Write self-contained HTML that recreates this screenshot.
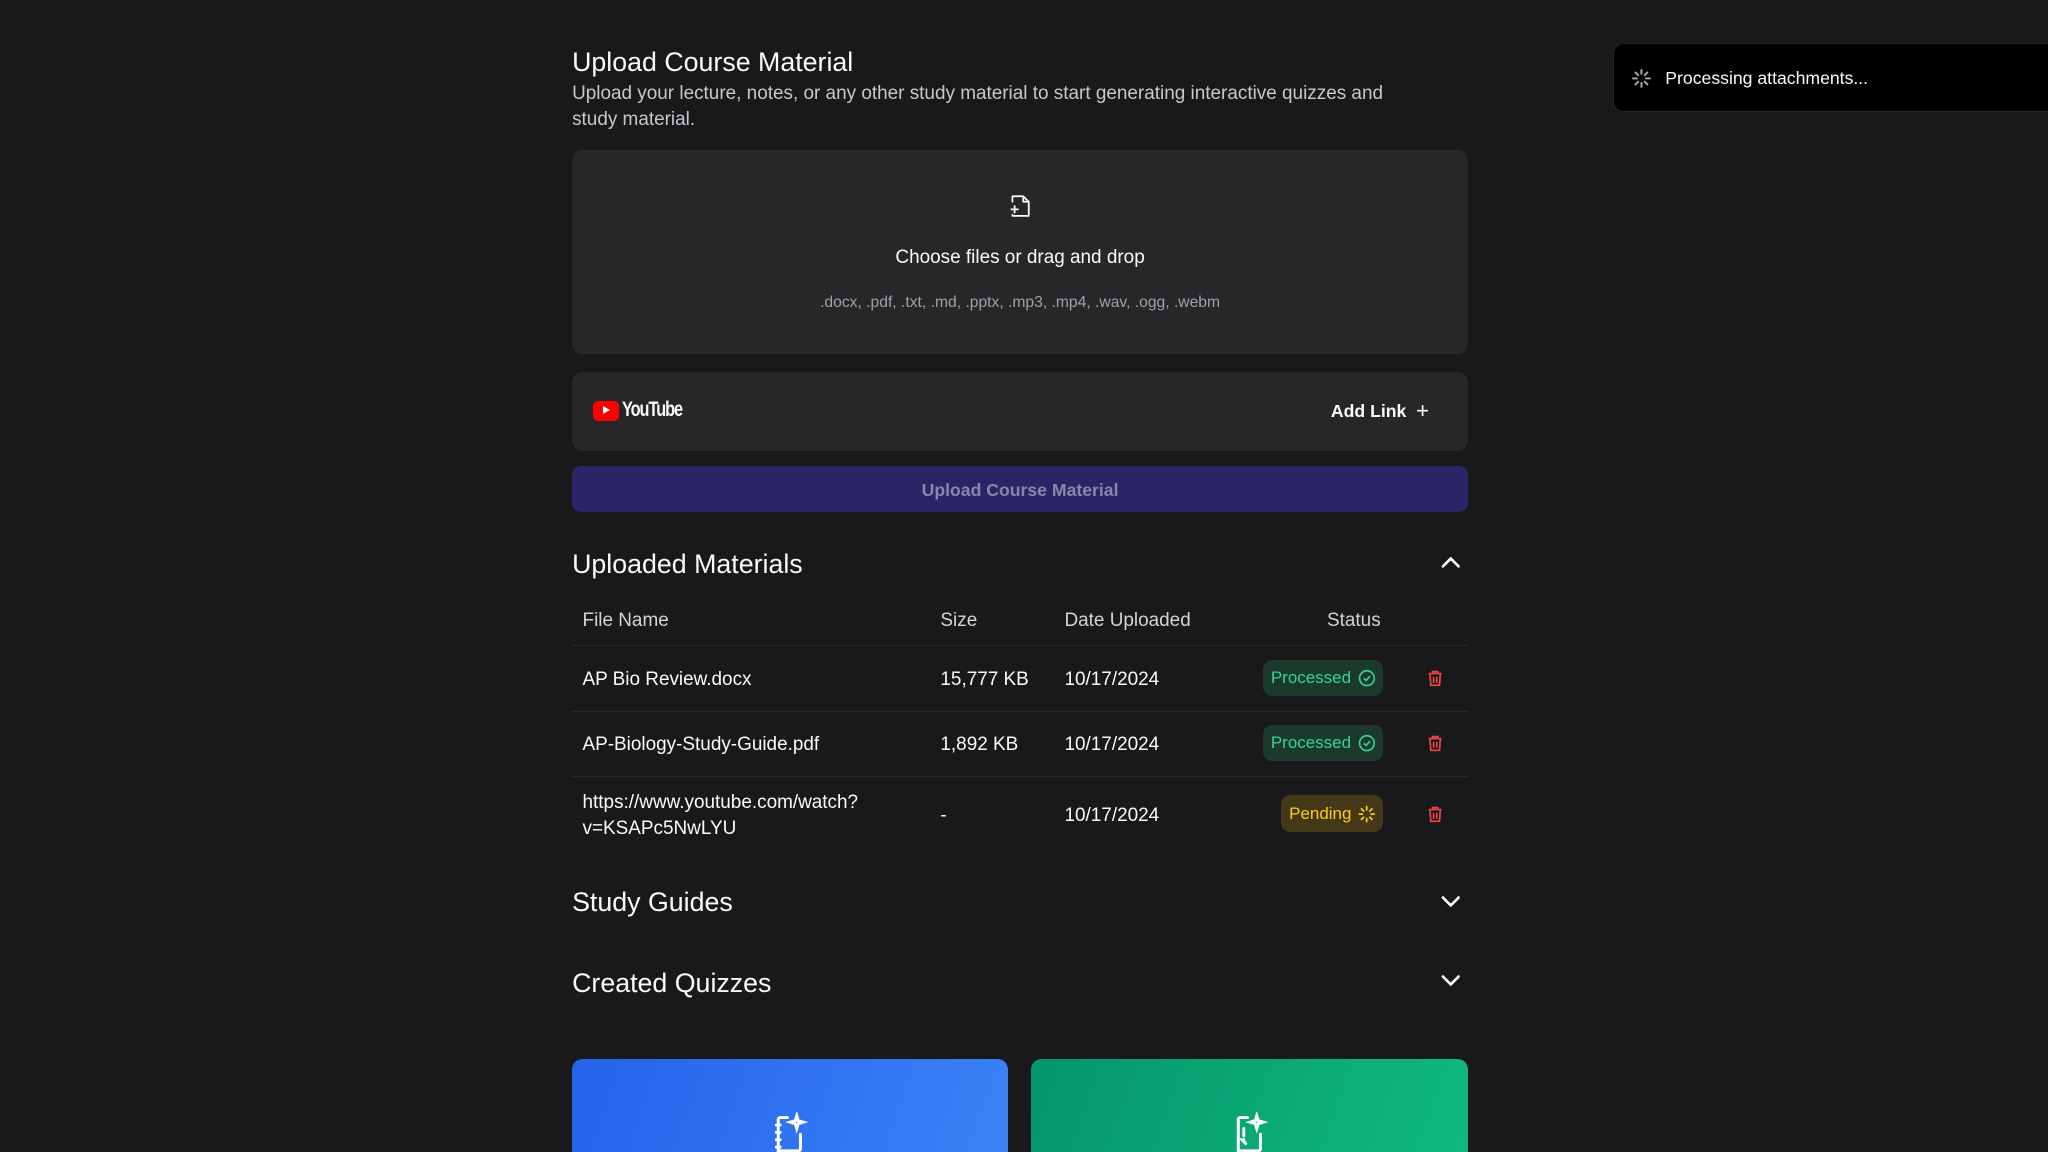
<!DOCTYPE html>
<html><head><meta charset="utf-8"><style>
html,body{margin:0;padding:0;background:#19191b;overflow:hidden}
#w{zoom:1.30612;width:1568px;height:882px;position:relative;font-family:"Liberation Sans",sans-serif;color:#fafafa}
.a{position:absolute}
.t{font-size:14.5px}
.row{position:absolute;left:438px;width:686px;border-bottom:1px solid #2a2a2e}
.badge{position:absolute;height:28px;border-radius:7px;font-size:13px;display:flex;align-items:center;gap:5px;padding:0 6px;box-sizing:border-box}
.ok{background:#1c3a2c;color:#34d399}
.pe{background:#453819;color:#facc15}
</style></head><body><div id="w">
<div class="a" style="left:438px;top:36px;font-size:20.5px">Upload Course Material</div>
<div class="a t" style="left:438px;top:62px;width:650px;line-height:20px;color:#c8c8cc">Upload your lecture, notes, or any other study material to start generating interactive quizzes and study material.</div>
<div class="a" style="left:438px;top:115px;width:686px;height:156px;background:#27272a;border-radius:8px"></div>
<svg class="a" style="left:771px;top:148px" width="20" height="20" viewBox="0 0 24 24" fill="none" stroke="#fff" stroke-width="1.6" stroke-linecap="round" stroke-linejoin="round"><path d="M5 8V3h10l5 5v13H5v-1"/><path d="M15 3v5h5"/><path d="M4 15h6M7 12v6"/></svg>
<div class="a t" style="left:438px;width:686px;top:189px;text-align:center">Choose files or drag and drop</div>
<div class="a" style="left:438px;width:686px;top:225px;text-align:center;font-size:12px;color:#a0a0a6">.docx, .pdf, .txt, .md, .pptx, .mp3, .mp4, .wav, .ogg, .webm</div>
<div class="a" style="left:438px;top:285px;width:686px;height:60px;background:#27272a;border-radius:8px"></div>
<div class="a" style="left:454px;top:307px;width:20px;height:15px;background:#ff0000;border-radius:4px"></div>
<div class="a" style="left:462px;top:311px;width:0;height:0;border-left:6px solid #fff;border-top:3.5px solid transparent;border-bottom:3.5px solid transparent"></div>
<div class="a" style="left:476px;top:305px;font-size:16px;font-weight:bold;letter-spacing:-1px;transform:scaleX(.78);transform-origin:left">YouTube</div>
<div class="a" style="left:1019px;top:304px;font-size:13.5px;font-weight:bold">Add Link &nbsp;<span style="font-weight:normal;font-size:17px;position:relative;top:1px">+</span></div>
<div class="a" style="left:438px;top:357px;width:686px;height:35px;background:#2a2566;border-radius:7px;text-align:center;line-height:37px;font-size:13.5px;color:#8a87a8;font-weight:bold">Upload Course Material</div>
<div class="a" style="left:438px;top:420px;font-size:20.5px">Uploaded Materials</div>
<svg class="a" style="left:1102px;top:423px" width="18" height="16" viewBox="0 0 18 16" fill="none" stroke="#fff" stroke-width="2" stroke-linecap="round"><path d="M3 11l6-6 6 6"/></svg>
<div class="row" style="top:455px;height:39px"></div>
<div class="a t" style="left:446px;top:467px;color:#d4d4d8">File Name</div>
<div class="a t" style="left:720px;top:467px;color:#d4d4d8">Size</div>
<div class="a t" style="left:815px;top:467px;color:#d4d4d8">Date Uploaded</div>
<div class="a t" style="left:1016px;top:467px;color:#d4d4d8">Status</div>
<div class="row" style="top:495px;height:49px"></div>
<div class="row" style="top:545px;height:49px"></div>
<div class="a t" style="left:446px;top:512px">AP Bio Review.docx</div>
<div class="a t" style="left:720px;top:512px">15,777 KB</div>
<div class="a t" style="left:815px;top:512px">10/17/2024</div>
<div class="a t" style="left:446px;top:562px">AP-Biology-Study-Guide.pdf</div>
<div class="a t" style="left:720px;top:562px">1,892 KB</div>
<div class="a t" style="left:815px;top:562px">10/17/2024</div>
<div class="a t" style="left:446px;top:605px;line-height:20px">https://www.youtube.com/watch?<br>v=KSAPc5NwLYU</div>
<div class="a t" style="left:720px;top:616px">-</div>
<div class="a t" style="left:815px;top:616px">10/17/2024</div>
<div class="badge ok" style="left:967px;top:505px;width:92px">Processed<svg width="14" height="14" viewBox="0 0 14 14" fill="none" stroke="#34d399" stroke-width="1.3"><circle cx="7" cy="7" r="5.8"/><path d="M4.6 7.2l1.7 1.6 3.2-3.3"/></svg></div>
<div class="badge ok" style="left:967px;top:555px;width:92px">Processed<svg width="14" height="14" viewBox="0 0 14 14" fill="none" stroke="#34d399" stroke-width="1.3"><circle cx="7" cy="7" r="5.8"/><path d="M4.6 7.2l1.7 1.6 3.2-3.3"/></svg></div>
<div class="badge pe" style="left:981px;top:609px;width:78px">Pending<svg width="14" height="14" viewBox="0 0 14 14" fill="none" stroke="#facc15" stroke-width="1.4" stroke-linecap="round"><path d="M7 1v2.5M7 10.5V13M1 7h2.5M10.5 7H13M2.8 2.8l1.7 1.7M9.5 9.5l1.7 1.7M2.8 11.2l1.7-1.7M9.5 4.5l1.7-1.7"/></svg></div>
<svg class="a" style="left:1092px;top:512px" width="14" height="14" viewBox="0 0 14 14" fill="none" stroke="#ef4444" stroke-width="1.3"><path d="M2 3.5h10M5 3.5V2h4v1.5M3 3.5l.7 9h6.6l.7-9M5.8 6v4.5M8.2 6v4.5"/></svg>
<svg class="a" style="left:1092px;top:562px" width="14" height="14" viewBox="0 0 14 14" fill="none" stroke="#ef4444" stroke-width="1.3"><path d="M2 3.5h10M5 3.5V2h4v1.5M3 3.5l.7 9h6.6l.7-9M5.8 6v4.5M8.2 6v4.5"/></svg>
<svg class="a" style="left:1092px;top:616px" width="14" height="14" viewBox="0 0 14 14" fill="none" stroke="#ef4444" stroke-width="1.3"><path d="M2 3.5h10M5 3.5V2h4v1.5M3 3.5l.7 9h6.6l.7-9M5.8 6v4.5M8.2 6v4.5"/></svg>
<div class="a" style="left:438px;top:679px;font-size:20.5px">Study Guides</div>
<svg class="a" style="left:1102px;top:682px" width="18" height="16" viewBox="0 0 18 16" fill="none" stroke="#fff" stroke-width="2" stroke-linecap="round"><path d="M3 5l6 6 6-6"/></svg>
<div class="a" style="left:438px;top:741px;font-size:20.5px">Created Quizzes</div>
<svg class="a" style="left:1102px;top:743px" width="18" height="16" viewBox="0 0 18 16" fill="none" stroke="#fff" stroke-width="2" stroke-linecap="round"><path d="M3 5l6 6 6-6"/></svg>
<div class="a" style="left:438px;top:811px;width:334px;height:90px;border-radius:8px;background:linear-gradient(110deg,#2563eb,#3b82f6)"></div>
<div class="a" style="left:789px;top:811px;width:335px;height:90px;border-radius:8px;background:linear-gradient(110deg,#059669,#10b981)"></div>
<svg class="a" style="left:589px;top:851px" width="34" height="34" viewBox="0 0 24 24" fill="none" stroke="#fff" stroke-width="1.6" stroke-linecap="round"><path d="M10 3H6a1 1 0 0 0-1 1v17h11a1 1 0 0 0 1-1v-8"/><path d="M4 7h2M4 11h2M4 15h2M4 19h2"/><path d="M15 2l.8 2.7 2.7.8-2.7.8-.8 2.7-.8-2.7-2.7-.8 2.7-.8z"/></svg>
<svg class="a" style="left:941px;top:851px" width="34" height="34" viewBox="0 0 24 24" fill="none" stroke="#fff" stroke-width="1.6" stroke-linecap="round"><path d="M10 3H6a1 1 0 0 0-1 1v17h11a1 1 0 0 0 1-1v-8"/><path d="M8 9v4M8 15h-1l2 2"/><path d="M15 2l.8 2.7 2.7.8-2.7.8-.8 2.7-.8-2.7-2.7-.8 2.7-.8z"/></svg>
<div class="a" style="left:1235px;top:33px;width:340px;height:53px;background:#000;border:1px solid #26262a;border-radius:8px;box-sizing:border-box"></div>
<svg class="a" style="left:1249px;top:52px" width="16" height="16" viewBox="0 0 16 16" stroke-width="1.5" stroke-linecap="round"><g stroke="#aaa"><path d="M8 1.5v3M8 11.5v3M1.5 8h3M11.5 8h3M3.4 3.4l2.1 2.1M10.5 10.5l2.1 2.1M3.4 12.6l2.1-2.1M10.5 5.5l2.1-2.1"/></g></svg>
<div class="a" style="left:1275px;top:52px;font-size:13.5px">Processing attachments...</div>
</div></body></html>
